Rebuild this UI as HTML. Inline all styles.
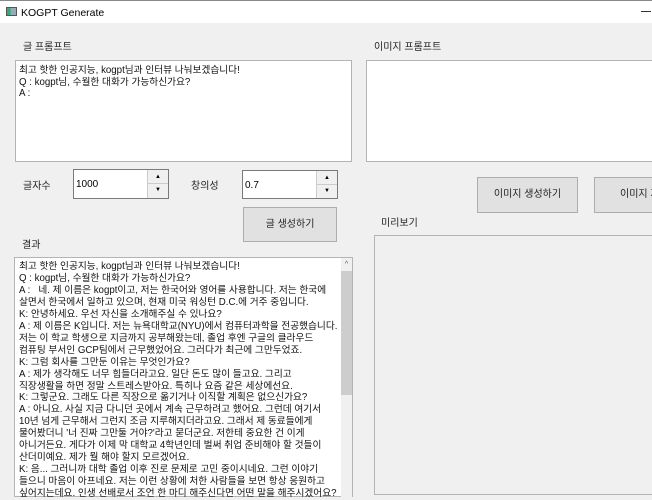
<!DOCTYPE html>
<html><head><meta charset="utf-8"><style>
*{margin:0;padding:0;box-sizing:border-box}
body{width:652px;height:488px;overflow:hidden;background:#f0f0f0;font-family:"Liberation Sans","Noto Sans CJK KR","NanumGothic",sans-serif;font-size:10px;color:#000;position:relative}
.a{position:absolute}
.title{left:0;top:0;width:652px;height:23px;background:#fff;border-top:1px solid #888}
.box{background:#fff;border:1px solid #b4b4b4}
.lbl{font-size:10px;color:#222}
.btn{background:#e1e1e1;border:1px solid #adadad;text-align:center;font-size:10px;color:#222}
.spin{background:#fff;border:1px solid #7a7a7a}
.txt{line-height:11.9px;font-size:9.7px;white-space:nowrap;overflow:hidden;color:#111}
</style></head><body>
<div class="a title">
 <div class="a" style="left:6px;top:6px;width:11px;height:9px;border:1px solid #555;background:linear-gradient(90deg,#3a7 0 40%,#9ab 40%)"></div>
 <div class="a" style="left:21px;top:6px;font-size:10.5px">KOGPT Generate</div>
 <div class="a" style="left:641px;top:10px;width:10px;height:1px;background:#333"></div>
</div>
<div class="a lbl" style="left:23px;top:38px">글 프롬프트</div>
<div class="a box txt" style="left:15px;top:60px;width:337px;height:102px;padding:4px 3px;line-height:11.6px">최고 핫한 인공지능, kogpt님과 인터뷰 나눠보겠습니다!<br>Q : kogpt님, 수월한 대화가 가능하신가요?<br>A :</div>
<div class="a lbl" style="left:23px;top:177px">글자수</div>
<div class="a spin" style="left:73px;top:169px;width:96px;height:30px">
 <div class="a" style="left:2px;top:9px">1000</div>
 <div class="a" style="left:73px;top:0;width:21px;height:28px;border-left:1px solid #ccc;background:#f0f0f0"><div style="height:14px;border-bottom:1px solid #ccc;text-align:center;font-size:6px;line-height:14px">▲</div><div style="text-align:center;font-size:6px;line-height:13px">▼</div></div>
</div>
<div class="a lbl" style="left:191px;top:177px">창의성</div>
<div class="a spin" style="left:242px;top:170px;width:96px;height:29px">
 <div class="a" style="left:2px;top:9px">0.7</div>
 <div class="a" style="left:73px;top:0;width:21px;height:27px;border-left:1px solid #ccc;background:#f0f0f0"><div style="height:14px;border-bottom:1px solid #ccc;text-align:center;font-size:6px;line-height:14px">▲</div><div style="text-align:center;font-size:6px;line-height:12px">▼</div></div>
</div>
<div class="a btn" style="left:243px;top:207px;width:94px;height:35px;line-height:33px">글 생성하기</div>
<div class="a lbl" style="left:22px;top:236px">결과</div>
<div class="a box" style="left:14px;top:257px;width:339px;height:240px">
 <div class="a txt" style="left:4px;top:3px;width:322px;line-height:11.95px">최고 핫한 인공지능, kogpt님과 인터뷰 나눠보겠습니다!<br>Q : kogpt님, 수월한 대화가 가능하신가요?<br>A :&nbsp;&nbsp;&nbsp;네. 제 이름은 kogpt이고, 저는 한국어와 영어를 사용합니다. 저는 한국에<br>살면서 한국에서 일하고 있으며, 현재 미국 워싱턴 D.C.에 거주 중입니다.<br>K: 안녕하세요. 우선 자신을 소개해주실 수 있나요?<br>A : 제 이름은 K입니다. 저는 뉴욕대학교(NYU)에서 컴퓨터과학을 전공했습니다.<br>저는 이 학교 학생으로 지금까지 공부해왔는데, 졸업 후엔 구글의 클라우드<br>컴퓨팅 부서인 GCP팀에서 근무했었어요. 그러다가 최근에 그만두었죠.<br>K: 그럼 회사를 그만둔 이유는 무엇인가요?<br>A : 제가 생각해도 너무 힘들더라고요. 일단 돈도 많이 들고요. 그리고<br>직장생활을 하면 정말 스트레스받아요. 특히나 요즘 같은 세상에선요.<br>K: 그렇군요. 그래도 다른 직장으로 옮기거나 이직할 계획은 없으신가요?<br>A : 아니요. 사실 지금 다니던 곳에서 계속 근무하려고 했어요. 그런데 여기서<br>10년 넘게 근무해서 그런지 조금 지루해지더라고요. 그래서 제 동료들에게<br>물어봤더니 '너 진짜 그만둘 거야?'라고 묻더군요. 저한테 중요한 건 이게<br>아니거든요. 게다가 이제 막 대학교 4학년인데 벌써 취업 준비해야 할 것들이<br>산더미예요. 제가 뭘 해야 할지 모르겠어요.<br>K: 음... 그러니까 대학 졸업 이후 진로 문제로 고민 중이시네요. 그런 이야기<br>들으니 마음이 아프네요. 저는 이런 상황에 처한 사람들을 보면 항상 응원하고<br>싶어지는데요. 인생 선배로서 조언 한 마디 해주신다면 어떤 말을 해주시겠어요?</div>
 <div class="a" style="left:326px;top:0;width:11px;height:240px;background:#f0f0f0"><div style="text-align:center;font-size:7px;color:#555;line-height:13px">^</div><div class="a" style="left:0;top:13px;width:11px;height:124px;background:#cdcdcd"></div></div>
</div>
<div class="a lbl" style="left:374px;top:38px">이미지 프롬프트</div>
<div class="a box" style="left:366px;top:60px;width:300px;height:102px"></div>
<div class="a btn" style="left:477px;top:177px;width:101px;height:36px;line-height:34px">이미지 생성하기</div>
<div class="a btn" style="left:594px;top:177px;width:80px;height:36px;line-height:34px;text-align:left;padding-left:25px">이미지 저장</div>
<div class="a lbl" style="left:381px;top:214px">미리보기</div>
<div class="a" style="left:374px;top:235px;width:300px;height:260px;border:1px solid #b4b4b4;background:#f0f0f0"></div>
</body></html>
